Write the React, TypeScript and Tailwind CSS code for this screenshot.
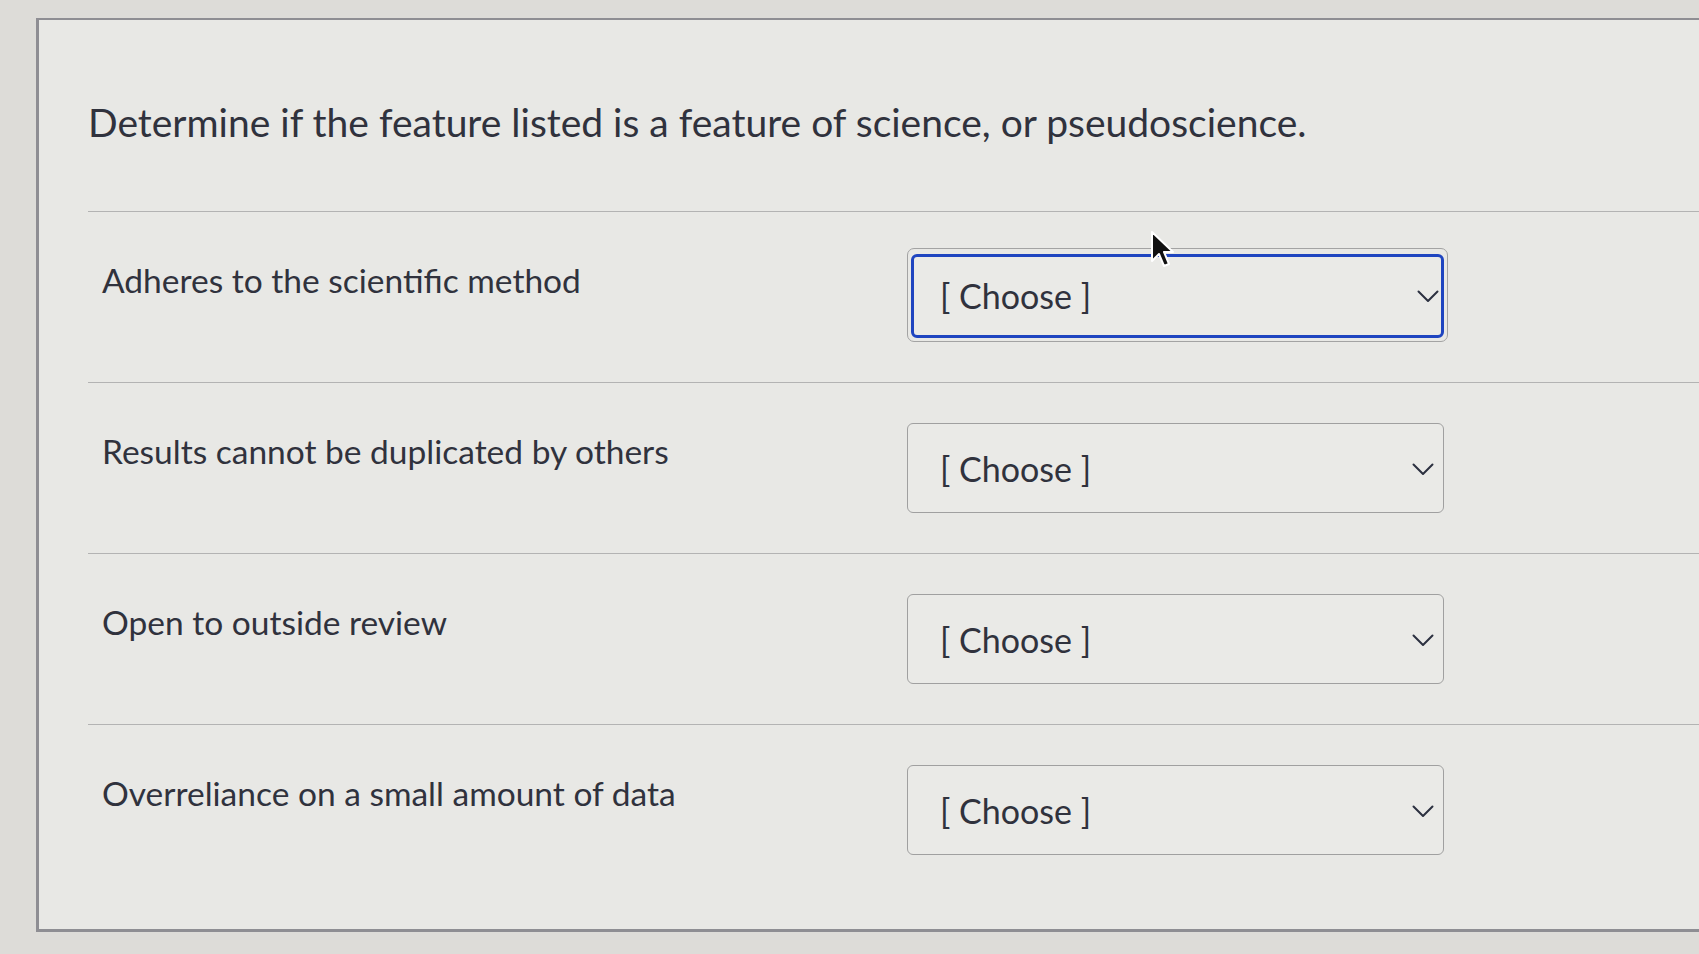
import React from "react";

const rows = [
  "Adheres to the scientific method",
  "Results cannot be duplicated by others",
  "Open to outside review",
  "Overreliance on a small amount of data",
];

function Chevron() {
  return (
    <svg width="22" height="13" viewBox="0 0 22 13" fill="none" className="shrink-0">
      <path d="M1.5 1.5 L11 11 L20.5 1.5" stroke="#2c3140" strokeWidth="2" strokeLinecap="round" strokeLinejoin="round" />
    </svg>
  );
}

function SelectBox({ focused }: { focused: boolean }) {
  if (focused) {
    return (
      <div className="w-[541px] h-[94px] -mt-[4px] rounded-[7px] border border-[#a3a3a3] p-[3px] pt-[5px]">
        <div className="h-full rounded-[6px] border-[3px] border-[#1f45c0] bg-[#eaeae7] flex items-center justify-between pl-[26px] pr-[2px] pt-[2px]">
          <span className="text-[34px] leading-[1.2] text-[#30323d]">[ Choose ]</span>
          <Chevron />
        </div>
      </div>
    );
  }
  return (
    <div className="w-[537px] h-[90px] rounded-[6px] border border-[#a0a0a0] bg-[#eaeae7] flex items-center justify-between pl-[32px] pr-[9px] pt-[4px]">
      <span className="text-[34px] leading-[1.2] text-[#30323d]">[ Choose ]</span>
      <Chevron />
    </div>
  );
}

export default function App() {
  return (
    <div className="relative w-full h-[954px] overflow-hidden bg-[#dddcd8] [font-family:Lato,'Noto_Sans',sans-serif]">
      <div className="ml-[36px] mt-[18px] h-[914px] border-l-[3px] border-t-[2px] border-b-[3px] border-[#8e8e93] bg-[#e8e8e5] pl-[49px]">
        <h1 className="pt-[79px] text-[39px] leading-[1.2] font-normal text-[#30323d]">
          Determine if the feature listed is a feature of science, or pseudoscience.
        </h1>
        <div className="mt-[65px]">
          {rows.map((label, i) => (
            <div key={label} className="flex items-start border-t border-[#b3b3b3] pt-[40px] pb-[40px]">
              <div className="w-[819px] pl-[14px] mt-[8px] text-[33.5px] leading-[1.2] text-[#30323d]">{label}</div>
              <SelectBox focused={i === 0} />
            </div>
          ))}
        </div>
      </div>
      <svg className="absolute left-[1150px] top-[230px]" width="26" height="40" viewBox="0 0 26 40">
        <path d="M2 2 L2 31 L9 24 L14 36 L19 34 L14 22 L23 22 Z" fill="#111" stroke="#fff" strokeWidth="2" strokeLinejoin="round" />
      </svg>
    </div>
  );
}
